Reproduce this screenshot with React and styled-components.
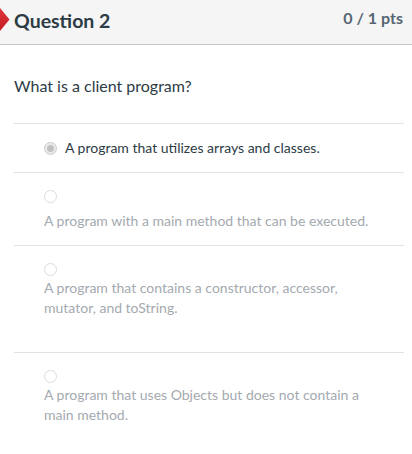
import styled, { createGlobalStyle } from "styled-components"

const GlobalStyle = createGlobalStyle`
  body {
    margin: 0;
    background: #ffffff;
    font-family: Lato, "Liberation Sans", sans-serif;
    color: #2d3b45;
  }
`

const StyledQuestion = styled.section`
  width: 412px;
  min-height: 454px;
  background: #ffffff;
`

const Header = styled.header`
  position: relative;
  height: 45px;
  display: flex;
  justify-content: space-between;
  align-items: flex-start;
  padding: 8px 9px 0 14px;
  box-sizing: border-box;
  background: #f5f5f5;
  border-bottom: 1px solid #c7c7c7;
`

const Marker = styled.svg`
  position: absolute;
  left: 0;
  top: 8px;
`

const Title = styled.h2`
  margin: 0;
  padding-top: 1px;
  font-size: 19.5px;
  line-height: 24px;
  font-weight: 700;
  color: #2d3b45;
`

const Points = styled.div`
  font-size: 16px;
  line-height: 20px;
  font-weight: 700;
  color: #556572;
`

const Body = styled.div`
  padding: 31px 8px 0 14px;
`

const Prompt = styled.p`
  margin: 0 0 27px;
  font-size: 16px;
  line-height: 20px;
  color: #2d3b45;
`

const Answers = styled.div`
  border-top: 1px solid #e2e2e2;
`

const Answer = styled.label`
  display: flex;
  flex-direction: ${(p) => (p.$inline ? "row" : "column")};
  align-items: ${(p) => (p.$inline ? "center" : "flex-start")};
  gap: ${(p) => (p.$inline ? "8px" : "0")};
  padding: ${(p) => (p.$inline ? "14px" : "17px")} 20px
    ${(p) => (p.$trailing ? "34px" : "14px")} 30px;
  border-bottom: ${(p) => (p.$last ? "none" : "1px solid #e2e2e2")};
`

const Radio = styled.span`
  flex: none;
  width: 13px;
  height: 13px;
  box-sizing: border-box;
  border-radius: 50%;
  border: 1px solid ${(p) => (p.$checked ? "#c9c9c9" : "#dcdcdc")};
  background: ${(p) =>
    p.$checked
      ? "radial-gradient(circle, #b9b9b9 0, #c4c4c4 3px, #e6e6e6 4px, #f2f2f2 6px)"
      : "#ffffff"};
`

const AnswerText = styled.span`
  display: block;
  margin-top: ${(p) => p.$offset || 0}px;
  font-size: 14px;
  line-height: 20px;
  color: ${(p) => (p.$faded ? "#a4aab0" : "#2d3b45")};
`

const answers = [
  { text: "A program that utilizes arrays and classes.", checked: true },
  { text: "A program with a main method that can be executed.", offset: 8 },
  {
    text: "A program that contains a constructor, accessor, mutator, and toString.",
    offset: 2,
    trailing: true,
  },
  {
    text: "A program that uses Objects but does not contain a main method.",
    offset: 2,
  },
]

export default function App() {
  return (
    <>
      <GlobalStyle />
      <StyledQuestion>
        <Header>
          <Marker width="10" height="23" viewBox="0 0 10 23">
            <defs>
              <linearGradient id="mk" x1="0" y1="0" x2="0" y2="1">
                <stop offset="0" stopColor="#e0343a" />
                <stop offset="1" stopColor="#c41c24" />
              </linearGradient>
            </defs>
            <polygon points="0,0 9.5,11.5 0,23" fill="url(#mk)" />
          </Marker>
          <Title>Question 2</Title>
          <Points>0 / 1 pts</Points>
        </Header>
        <Body>
          <Prompt>What is a client program?</Prompt>
          <Answers>
            {answers.map((a, i) => (
              <Answer
                key={i}
                $inline={a.checked}
                $trailing={a.trailing}
                $last={i === answers.length - 1}
              >
                <Radio $checked={a.checked} />
                <AnswerText $faded={!a.checked} $offset={a.checked ? 0 : a.offset}>
                  {a.text}
                </AnswerText>
              </Answer>
            ))}
          </Answers>
        </Body>
      </StyledQuestion>
    </>
  )
}
